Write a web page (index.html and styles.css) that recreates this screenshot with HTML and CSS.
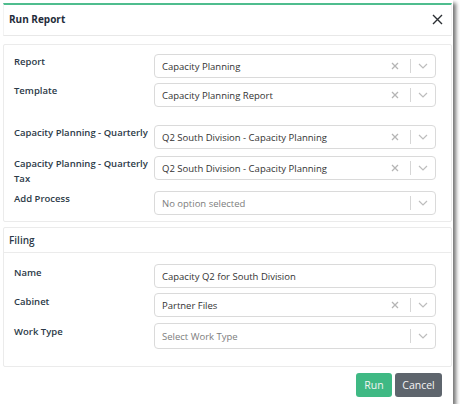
FILE: index.html
```html
<!DOCTYPE html>
<html>
<head>
<meta charset="utf-8">
<link rel="stylesheet" href="styles.css">
</head>
<body>
<div class="modal">
  <div class="header">
    <div class="title">Run Report</div>
    <span class="close"><svg width="11" height="11" viewBox="0 0 11 11"><path d="M1 1L10 10M10 1L1 10" stroke="#2b2f33" stroke-width="1.4" fill="none"/></svg></span>
  </div>

  <div class="panel p1">
    <div class="row r1">
      <div class="label">Report</div>
      <div class="select"><span class="value">Capacity Planning</span><span class="clear"><svg width="8" height="8" viewBox="0 0 8 8"><path d="M1 1L7 7M7 1L1 7" stroke="#b5b5b5" stroke-width="1.3"/></svg></span><span class="sep"></span><span class="chev"><svg width="10" height="6" viewBox="0 0 10 6"><path d="M1 1L5 5L9 1" stroke="#bdbdbd" stroke-width="1.2" fill="none"/></svg></span></div>
    </div>
    <div class="row r2">
      <div class="label">Template</div>
      <div class="select"><span class="value">Capacity Planning Report</span><span class="clear"><svg width="8" height="8" viewBox="0 0 8 8"><path d="M1 1L7 7M7 1L1 7" stroke="#b5b5b5" stroke-width="1.3"/></svg></span><span class="sep"></span><span class="chev"><svg width="10" height="6" viewBox="0 0 10 6"><path d="M1 1L5 5L9 1" stroke="#bdbdbd" stroke-width="1.2" fill="none"/></svg></span></div>
    </div>
    <div class="row r3">
      <div class="label">Capacity Planning - Quarterly</div>
      <div class="select"><span class="value">Q2 South Division - Capacity Planning</span><span class="clear"><svg width="8" height="8" viewBox="0 0 8 8"><path d="M1 1L7 7M7 1L1 7" stroke="#b5b5b5" stroke-width="1.3"/></svg></span><span class="sep"></span><span class="chev"><svg width="10" height="6" viewBox="0 0 10 6"><path d="M1 1L5 5L9 1" stroke="#bdbdbd" stroke-width="1.2" fill="none"/></svg></span></div>
    </div>
    <div class="row r4">
      <div class="label">Capacity Planning - Quarterly Tax</div>
      <div class="select"><span class="value">Q2 South Division - Capacity Planning</span><span class="clear"><svg width="8" height="8" viewBox="0 0 8 8"><path d="M1 1L7 7M7 1L1 7" stroke="#b5b5b5" stroke-width="1.3"/></svg></span><span class="sep"></span><span class="chev"><svg width="10" height="6" viewBox="0 0 10 6"><path d="M1 1L5 5L9 1" stroke="#bdbdbd" stroke-width="1.2" fill="none"/></svg></span></div>
    </div>
    <div class="row r5">
      <div class="label">Add Process</div>
      <div class="select"><span class="value placeholder">No option selected</span><span class="sep"></span><span class="chev"><svg width="10" height="6" viewBox="0 0 10 6"><path d="M1 1L5 5L9 1" stroke="#bdbdbd" stroke-width="1.2" fill="none"/></svg></span></div>
    </div>
  </div>

  <div class="panel p2">
    <div class="panel-head">Filing</div>
    <div class="panel-body">
      <div class="row f1">
        <div class="label">Name</div>
        <div class="select input"><span class="value">Capacity Q2 for South Division</span></div>
      </div>
      <div class="row f2">
        <div class="label">Cabinet</div>
        <div class="select"><span class="value">Partner Files</span><span class="clear"><svg width="8" height="8" viewBox="0 0 8 8"><path d="M1 1L7 7M7 1L1 7" stroke="#b5b5b5" stroke-width="1.3"/></svg></span><span class="sep"></span><span class="chev"><svg width="10" height="6" viewBox="0 0 10 6"><path d="M1 1L5 5L9 1" stroke="#bdbdbd" stroke-width="1.2" fill="none"/></svg></span></div>
      </div>
      <div class="row f3">
        <div class="label">Work Type</div>
        <div class="select tall"><span class="value placeholder">Select Work Type</span><span class="sep"></span><span class="chev"><svg width="10" height="6" viewBox="0 0 10 6"><path d="M1 1L5 5L9 1" stroke="#bdbdbd" stroke-width="1.2" fill="none"/></svg></span></div>
      </div>
    </div>
  </div>

  <div class="footer">
    <span class="btn run">Run</span>
    <span class="btn cancel">Cancel</span>
  </div>
</div>
</body>
</html>
```

FILE: styles.css
```css
html, body {
  margin: 0;
  padding: 0;
  background: #ffffff;
}

.modal {
  width: 453px;
  height: 404px;
  box-sizing: border-box;
  padding: 3px 1px 0 3px;
  background: #ffffff;
  box-shadow: 3px 3px 4px rgba(0, 0, 0, 0.55);
  font-family: "Open Sans", "Liberation Sans", sans-serif;
  color: #333;
}

.header {
  height: 33px;
  box-sizing: border-box;
  border-top: 2px solid #4fbd8e;
  border-bottom: 1px solid #e8e8e8;
  border-left: 1px solid #f3f3f3;
  border-right: 1px solid #f3f3f3;
  display: flex;
  align-items: center;
  justify-content: space-between;
  padding: 0 8px 2px 5px;
}

.title {
  font-size: 10px;
  font-weight: 700;
  color: #1f2d3b;
}

.close {
  display: flex;
  width: 11px;
  height: 11px;
}

.panel {
  border: 1px solid #ebebeb;
  border-radius: 2px;
}

.p1 {
  margin-top: 8px;
  padding: 9px 15px 6px 10px;
}

.row {
  display: flex;
  align-items: flex-start;
}

.label {
  width: 140px;
  flex: none;
  font-size: 9.5px;
  font-weight: 600;
  line-height: 15px;
  color: #2c3a48;
}

.r2 { margin-top: 5px; }
.r3 { margin-top: 18px; }
.r4 { margin-top: 7px; }
.r5 { margin-top: 5px; }

.select {
  flex: 1;
  height: 24px;
  box-sizing: border-box;
  border: 1px solid #dadada;
  border-radius: 4px;
  display: flex;
  align-items: center;
  background: #fff;
}

.select.tall { height: 26px; }

.value {
  flex: 1;
  padding-left: 7px;
  font-size: 9.5px;
  color: #333;
  white-space: nowrap;
}

.value.placeholder { color: #7d7d7d; }

.clear {
  width: 16px;
  margin-right: 7px;
  display: flex;
  justify-content: center;
  align-items: center;
}

.sep {
  width: 1px;
  height: 14px;
  background: #d6d6d6;
}

.chev {
  width: 24px;
  display: flex;
  justify-content: center;
  align-items: center;
}

.p2 {
  margin-top: 5px;
}

.panel-head {
  height: 25px;
  box-sizing: border-box;
  border-bottom: 1px solid #ebebeb;
  padding: 0 5px;
  line-height: 24px;
  font-size: 10px;
  font-weight: 600;
  color: #2c3a48;
}

.panel-body {
  padding: 11px 15px 17px 10px;
}

.f1 .label, .f2 .label, .f3 .label { padding-top: 1px; }
.f2 { margin-top: 5px; }
.f3 { margin-top: 6px; }

.footer {
  margin-top: 6px;
  display: flex;
  justify-content: flex-end;
  gap: 3px;
  padding-right: 10px;
}

.btn {
  height: 24px;
  box-sizing: border-box;
  border-radius: 3px;
  font-size: 10.5px;
  line-height: 24px;
  text-align: center;
  color: #f4f4f4;
}

.run {
  width: 36px;
  background: #3fb984;
}

.cancel {
  width: 47px;
  background: #5e656d;
}
```
